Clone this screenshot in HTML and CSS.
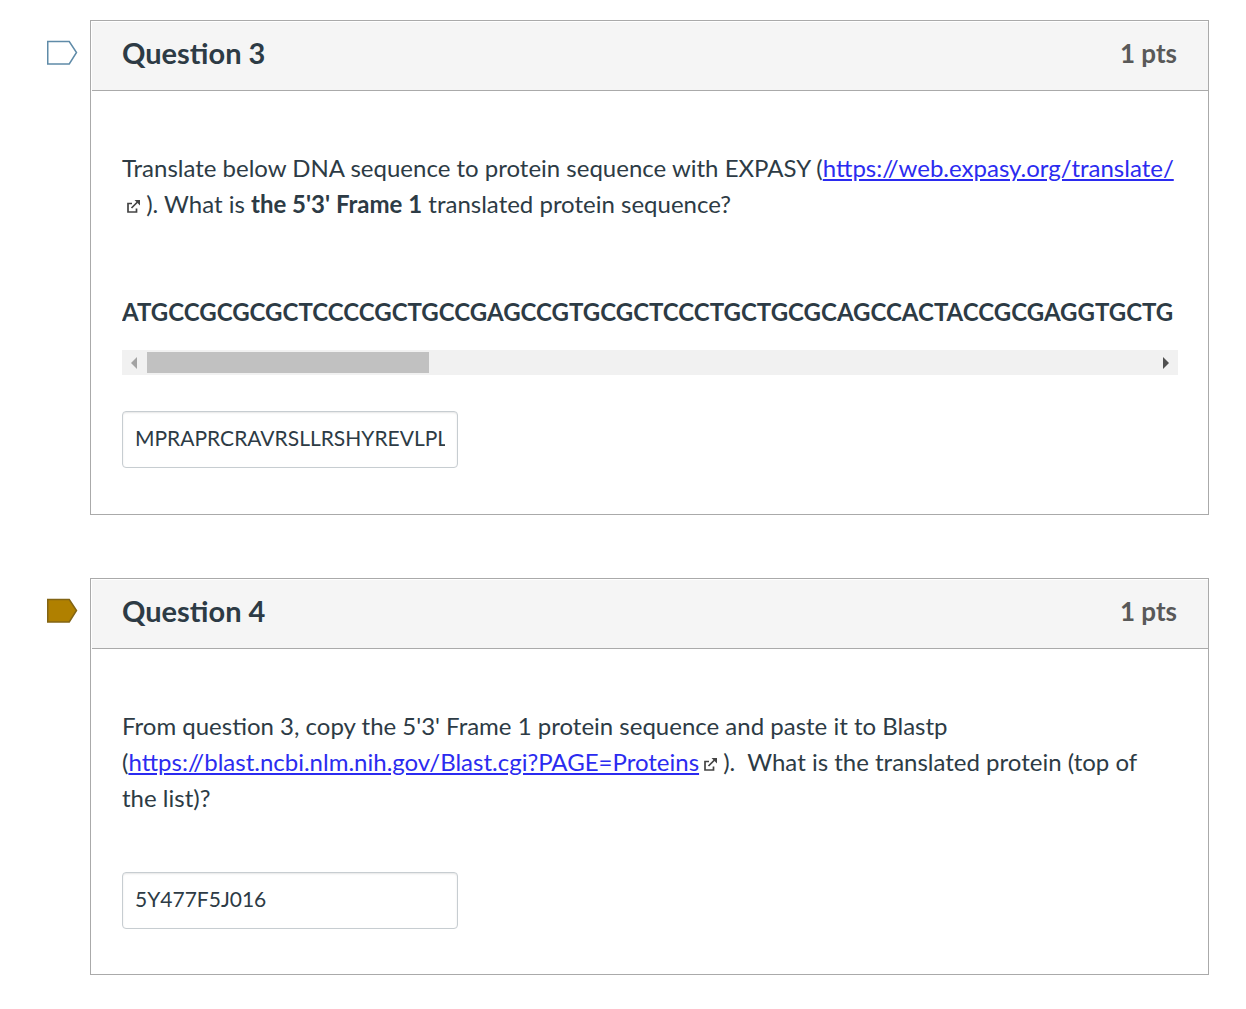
FILE: index.html
```html
<!DOCTYPE html>
<html lang="en">
<head>
<meta charset="utf-8">
<title>Quiz</title>
<link rel="stylesheet" href="styles.css">
</head>
<body>
<main class="quiz">
  <section class="question">
    <button class="flag" type="button" aria-label="Flag question 3" aria-pressed="false">
      <svg width="31" height="25" viewBox="0 0 31 25"><path d="M.75 1.500h21.500l7.250 11-7.250 11.500H.75z"/></svg>
    </button>
    <div class="card">
      <header class="card-header"><h2 class="title">Question 3</h2><span class="points">1 pts</span></header>
      <div class="card-body">
        <p class="text">Translate below DNA sequence to protein sequence with EXPASY (<a href="https://web.expasy.org/translate/">https://web.expasy.org/translate/</a> <svg class="external" width="13" height="14" viewBox="0 0 13 14"><path d="M5 4.500H1V13h8.500V9.500M4.500 9l6-6"/><path class="tip" d="M7.500 1H13v5.500z"/></svg> ). What is <strong>the 5'3' Frame 1</strong> translated protein sequence?</p>
        <div class="sequence"><strong>ATGCCGCGCGCTCCCCGCTGCCGAGCCGTGCGCTCCCTGCTGCGCAGCCACTACCGCGAGGTGCTG</strong></div>
        <div class="scrollbar" aria-hidden="true">
          <svg class="arrow" width="25" height="25" viewBox="0 0 25 25"><path fill="#a3a3a3" d="M15 7v12l-6-6z"/></svg>
          <div class="track"><div class="thumb"></div></div>
          <svg class="arrow" width="25" height="25" viewBox="0 0 25 25"><path fill="#505050" d="M10 7v12l6-6z"/></svg>
        </div>
        <input class="answer" type="text" aria-label="Answer to question 3" value="MPRAPRCRAVRSLLRSHYREVLPLATFVRRLGPQ">
      </div>
    </div>
  </section>
  <section class="question">
    <button class="flag flagged" type="button" aria-label="Flag question 4" aria-pressed="true">
      <svg width="31" height="25" viewBox="0 0 31 25"><path d="M.75 1.500h21.500l7.250 11-7.250 11.500H.75z"/></svg>
    </button>
    <div class="card">
      <header class="card-header"><h2 class="title">Question 4</h2><span class="points">1 pts</span></header>
      <div class="card-body">
        <p class="text">From question 3, copy the 5'3' Frame 1 protein sequence and paste it to Blastp (<a href="https://blast.ncbi.nlm.nih.gov/Blast.cgi?PAGE=Proteins">https://blast.ncbi.nlm.nih.gov/Blast.cgi?PAGE=Proteins</a><svg class="external" width="13" height="14" viewBox="0 0 13 14"><path d="M5 4.500H1V13h8.500V9.500M4.500 9l6-6"/><path class="tip" d="M7.500 1H13v5.500z"/></svg> ).&nbsp; What is the translated protein (top of the list)?</p>
        <input class="answer" type="text" aria-label="Answer to question 4" value="5Y477F5J016">
      </div>
    </div>
  </section>
</main>
</body>
</html>
```
FILE: styles.css
```css
* { box-sizing: border-box; }
body {
  margin: 0;
  background: #fff;
  color: #2d3b45;
  font: 24px/36px Lato, sans-serif;
}
.quiz {
  display: flex;
  flex-direction: column;
  gap: 63px;
  padding: 20px 37px 34px 47px;
}
.question { display: flex; align-items: flex-start; gap: 12px; }
.flag {
  flex: none;
  width: 31px;
  height: 25px;
  margin-top: 20px;
  padding: 0;
  border: 0;
  background: none;
}
.flag svg { display: block; }
.flag path { fill: #fff; stroke: #5f8ba8; stroke-width: 1.500; }
.flag.flagged path { fill: #b08000; stroke: #826414; }
.card { flex: 1; min-width: 0; padding: 1px 0 0 1px; border: 1px solid #aaa; }
.card-header {
  display: flex;
  align-items: center;
  justify-content: space-between;
  height: 69px;
  padding: 0 31px 6px 30px;
  background: #f5f5f5;
  border-bottom: 1px solid #aaa;
}
.title { margin: 0; font-size: 29px; font-weight: 700; line-height: 36px; }
.points { color: #595959; font-size: 26px; font-weight: 700; }
.card-body { padding: 59px 30px 45px; }
.text { margin: 0 0 56px; padding-right: 3px; }
.text a { color: #2b2bf0; text-decoration: underline; }
.external { margin-left: 5px; fill: none; stroke: #444; stroke-width: 1.700; vertical-align: 0; }
.external .tip { fill: #444; stroke: none; }
.sequence { margin-top: 72px; overflow: hidden; white-space: nowrap; }
.scrollbar {
  display: flex;
  height: 25px;
  margin: 20px 0 36px;
  background: #f1f1f1;
}
.arrow { flex: none; }
.track { flex: 1; padding: 2px 0; }
.thumb { width: 28%; height: 21px; background: #c1c1c1; }
.answer {
  display: block;
  width: 336px;
  height: 57px;
  padding: 0 12px 4px;
  border: 1px solid #c7cdd1;
  border-radius: 4px;
  background: #fff;
  box-shadow: inset 0 1px 2px #0000001a;
  color: #2d3b45;
  font: 21px/30px Lato, sans-serif;
}
.scrollbar + .answer { margin-bottom: 1px; }
```
